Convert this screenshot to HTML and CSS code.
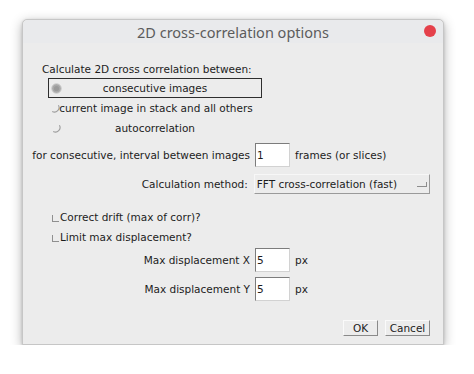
FILE: index.html
```html
<!DOCTYPE html>
<html>
<head>
    <meta charset="utf-8">
    <link rel="stylesheet" href="styles.css">
</head>
<body>
    <div class="dialog">
        <div class="titlebar">
            <span class="title">2D cross-correlation options</span>
            <span class="close"></span>
        </div>

        <div class="content">
            <div class="heading">Calculate 2D cross correlation between:</div>

            <div class="radios">
                <div class="radio selected">
                    <svg class="radio-icon" width="11" height="11" viewBox="0 0 11 11">
                        <circle cx="5.5" cy="5.5" r="4.8" fill="#a9a9a9" stroke="#cfcfcf" stroke-width="1"/>
                        <circle cx="5.5" cy="5.5" r="2.6" fill="#9a9a9a"/>
                    </svg>
                    <span>consecutive images</span>
                </div>
                <div class="radio">
                    <svg class="radio-icon" width="11" height="11" viewBox="0 0 11 11">
                        <path d="M3.25 9.4 A4.5 4.5 0 0 0 9.4 3.25" fill="none" stroke="#9c9c9c" stroke-width="1.1"/>
                    </svg>
                    <span>current image in stack and all others</span>
                </div>
                <div class="radio">
                    <svg class="radio-icon" width="11" height="11" viewBox="0 0 11 11">
                        <path d="M3.25 9.4 A4.5 4.5 0 0 0 9.4 3.25" fill="none" stroke="#9c9c9c" stroke-width="1.1"/>
                    </svg>
                    <span>autocorrelation</span>
                </div>
            </div>

            <div class="field-row interval">
                <span class="field-label">for consecutive, interval between images</span>
                <input class="num" type="text" value="1">
                <span class="unit">frames (or slices)</span>
            </div>

            <div class="field-row method">
                <span class="field-label">Calculation method:</span>
                <div class="select">FFT cross-correlation (fast)<span class="arrow"></span></div>
            </div>

            <div class="check first">
                <span class="box"></span>Correct drift (max of corr)?
            </div>
            <div class="check">
                <span class="box"></span>Limit max displacement?
            </div>

            <div class="field-row max-x">
                <span class="field-label">Max displacement X</span>
                <input class="num" type="text" value="5">
                <span class="unit">px</span>
            </div>
            <div class="field-row max-y">
                <span class="field-label">Max displacement Y</span>
                <input class="num" type="text" value="5">
                <span class="unit">px</span>
            </div>

            <div class="buttons">
                <button class="btn ok">OK</button>
                <button class="btn cancel">Cancel</button>
            </div>
        </div>
    </div>
</body>
</html>
```

FILE: styles.css
```css
body {
    margin: 0;
    background: #ffffff;
    font-family: 'DejaVu Sans', Verdana, sans-serif;
    font-size: 10.5px;
    color: #1c1c1c;
}

.dialog {
    width: 422px;
    height: 326px;
    margin: 19px 0 0 22px;
    box-sizing: border-box;
    border: 1px solid #c6c6c6;
    border-radius: 5px 5px 0 0;
    background: #ececec;
    box-shadow: 0 3px 12px rgba(0, 0, 0, 0.3), 0 1px 3px rgba(0, 0, 0, 0.15);
    display: flex;
    flex-direction: column;
}

.titlebar {
    height: 23px;
    position: relative;
    display: flex;
    align-items: center;
    justify-content: center;
    background: #e9eaec;
    border-radius: 5px 5px 0 0;
}

.title {
    font-family: 'Noto Sans', 'Open Sans', sans-serif;
    font-size: 14.5px;
    color: #5c5c5c;
}

.close {
    position: absolute;
    right: 7px;
    top: 5px;
    width: 12px;
    height: 12px;
    border-radius: 50%;
    background: #e5414b;
}

.content {
    flex: 1;
    display: flex;
    flex-direction: column;
    padding: 0 13px 0 8px;
}

.heading {
    line-height: 14px;
    margin: 19px 0 0 11px;
}

.radios {
    width: 214px;
    margin: 2px 0 0 17px;
}

.radio {
    position: relative;
    height: 20px;
    box-sizing: border-box;
    display: flex;
    align-items: center;
    justify-content: center;
    white-space: nowrap;
}

.radio.selected {
    border: 1px solid #2e2e2e;
}

.radio span {
    position: relative;
}

.radio-icon {
    position: absolute;
    left: 2px;
    top: 4px;
}

.radio.selected .radio-icon {
    left: 2px;
    top: 4px;
}

.radio:nth-child(2) .radio-icon {
    left: 1px;
}

.radio:nth-child(2) span {
    left: 1px;
}

.field-row {
    display: flex;
    align-items: center;
    white-space: nowrap;
}

.field-label {
    width: 219px;
    text-align: right;
}

.num {
    width: 35px;
    height: 24px;
    box-sizing: border-box;
    margin: 0 0 0 5px;
    padding: 0 0 0 1px;
    border: 1px solid #d2d2d2;
    border-top-color: #7c7c7c;
    border-left-color: #7c7c7c;
    background: #ffffff;
    font-family: inherit;
    font-size: 10.5px;
    color: #1c1c1c;
    outline: none;
}

.unit {
    margin-left: 5px;
}

.interval {
    margin-top: 5px;
}

.method {
    margin-top: 7px;
}

.select {
    position: relative;
    width: 178px;
    height: 20px;
    box-sizing: border-box;
    margin-left: 6px;
    padding-left: 2px;
    display: flex;
    align-items: center;
    border: 1px solid #f7f7f7;
    border-right-color: #9a9a9a;
    border-bottom-color: #9a9a9a;
    background: #ececec;
}

.arrow {
    position: absolute;
    right: 2px;
    top: 7px;
    width: 9px;
    height: 4px;
    border-right: 1px solid #8d8d8d;
    border-bottom: 1px solid #8d8d8d;
}

.check {
    height: 20px;
    display: flex;
    align-items: center;
    margin-left: 21px;
}

.check.first {
    margin-top: 13px;
}

.box {
    width: 6px;
    height: 6px;
    margin: 2px 1px 0 0;
    border-left: 1px solid #8f8f8f;
    border-bottom: 1px solid #8f8f8f;
}

.max-x {
    margin-top: 1px;
}

.max-y {
    margin-top: 5px;
}

.buttons {
    display: flex;
    justify-content: flex-end;
    gap: 7px;
    margin-top: 19px;
}

.btn {
    height: 16px;
    padding: 0;
    box-sizing: border-box;
    border: 1px solid #fafafa;
    border-right-color: #8a8a8a;
    border-bottom-color: #8a8a8a;
    background: #ececec;
    font-family: inherit;
    font-size: 10.5px;
    color: #1c1c1c;
}

.ok {
    width: 35px;
}

.cancel {
    width: 45px;
}
```
